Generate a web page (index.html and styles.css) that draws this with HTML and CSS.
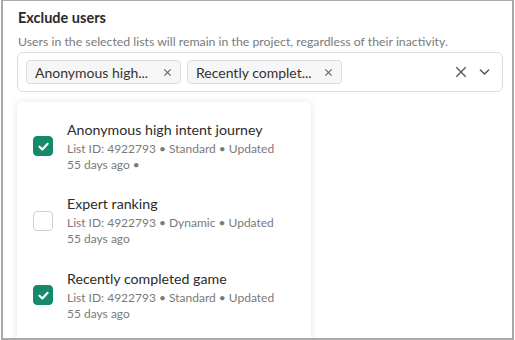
FILE: index.html
```html
<!DOCTYPE html>
<html>
<head>
<meta charset="utf-8">
<link rel="stylesheet" href="styles.css">
</head>
<body>
<div class="frame">
  <h2 class="title">Exclude users</h2>
  <p class="desc">Users in the selected lists will remain in the project, regardless of their inactivity.</p>
  <div class="select">
    <div class="chips">
      <span class="chip"><span class="chip-text">Anonymous high...</span><svg class="chip-x" viewBox="0 0 10 10"><path d="M1.5 1.5 L8.5 8.5 M8.5 1.5 L1.5 8.5"/></svg></span>
      <span class="chip"><span class="chip-text">Recently complet...</span><svg class="chip-x" viewBox="0 0 10 10"><path d="M1.5 1.5 L8.5 8.5 M8.5 1.5 L1.5 8.5"/></svg></span>
    </div>
    <div class="controls">
      <svg class="clear" viewBox="0 0 14 14"><path d="M1.5 1.5 L12.5 12.5 M12.5 1.5 L1.5 12.5"/></svg>
      <svg class="chev" viewBox="0 0 12 8"><path d="M1.5 1.8 L6 6.2 L10.5 1.8"/></svg>
    </div>
  </div>
  <div class="menu">
    <div class="item">
      <span class="cb checked"><svg viewBox="0 0 12 12"><path d="M2.3 6.2 L4.9 8.7 L9.8 3.5"/></svg></span>
      <div class="info">
        <div class="name">Anonymous high intent journey</div>
        <div class="meta">List ID: 4922793 • Standard • Updated<br>55 days ago •</div>
      </div>
    </div>
    <div class="item">
      <span class="cb"></span>
      <div class="info">
        <div class="name">Expert ranking</div>
        <div class="meta">List ID: 4922793 • Dynamic • Updated<br>55 days ago</div>
      </div>
    </div>
    <div class="item">
      <span class="cb checked"><svg viewBox="0 0 12 12"><path d="M2.3 6.2 L4.9 8.7 L9.8 3.5"/></svg></span>
      <div class="info">
        <div class="name">Recently completed game</div>
        <div class="meta">List ID: 4922793 • Standard • Updated<br>55 days ago</div>
      </div>
    </div>
  </div>
</div>
</body>
</html>
```

FILE: styles.css
```css
* { box-sizing: border-box; }
html, body { margin: 0; padding: 0; background: #fff; }
body {
  font-family: "Lato", "Noto Sans", sans-serif;
  color: #2b2b2b;
  width: 515px;
  height: 340px;
  overflow: hidden;
  padding-left: 1px;
}
.frame {
  width: 513px;
  height: 340px;
  border: 2px solid #a9a9a9;
  border-top-width: 1px;
  padding: 8px 9px 0 14px;
  overflow: hidden;
}
.title {
  margin: 0 0 0 1px;
  font-size: 14.5px;
  font-weight: 700;
  line-height: 18px;
  color: #2a2a2a;
}
.desc {
  margin: 7px 0 0 1px;
  font-size: 12.3px;
  line-height: 16px;
  color: #7a7a7a;
}
.select {
  margin-top: 2px;
  height: 40px;
  border: 1px solid #dcdcdc;
  border-radius: 6px;
  display: flex;
  align-items: center;
  justify-content: space-between;
  padding: 0 12px 0 8px;
}
.chips { display: flex; gap: 6px; }
.chip {
  display: flex;
  align-items: center;
  justify-content: space-between;
  width: 155px;
  height: 24px;
  background: #f6f6f6;
  border: 1px solid #dedede;
  border-radius: 4px;
  padding: 0 8px 0 8px;
  font-size: 14px;
  color: #333;
}
.chip-x { width: 9px; height: 9px; stroke: #666; stroke-width: 1.3; fill: none; }
.controls { display: flex; align-items: center; gap: 12px; }
.clear { width: 12px; height: 12px; stroke: #555; stroke-width: 1.5; fill: none; }
.chev { width: 11px; height: 8px; stroke: #555; stroke-width: 1.6; fill: none; stroke-linecap: round; stroke-linejoin: round; }
.menu {
  margin-top: 10px;
  width: 294px;
  height: 260px;
  background: #fff;
  border-radius: 6px;
  box-shadow: 0 0 8px rgba(0,0,0,0.10);
  padding: 7px 0 0 16px;
}
.item {
  display: flex;
  align-items: center;
  gap: 14px;
  height: 74.5px;
}
.cb {
  flex: none;
  width: 20px;
  height: 20px;
  border: 1.5px solid #cfcfcf;
  border-radius: 4px;
  background: #fff;
  display: flex;
  align-items: center;
  justify-content: center;
}
.cb.checked { background: #148a6b; border-color: #148a6b; }
.cb svg { width: 13px; height: 13px; stroke: #fff; stroke-width: 2; fill: none; stroke-linecap: round; stroke-linejoin: round; }
.info { display: flex; flex-direction: column; }
.name { font-size: 14.2px; line-height: 20px; color: #2b2b2b; }
.meta { font-size: 12px; line-height: 16px; color: #7a7a7a; margin-top: 1px; }
```
